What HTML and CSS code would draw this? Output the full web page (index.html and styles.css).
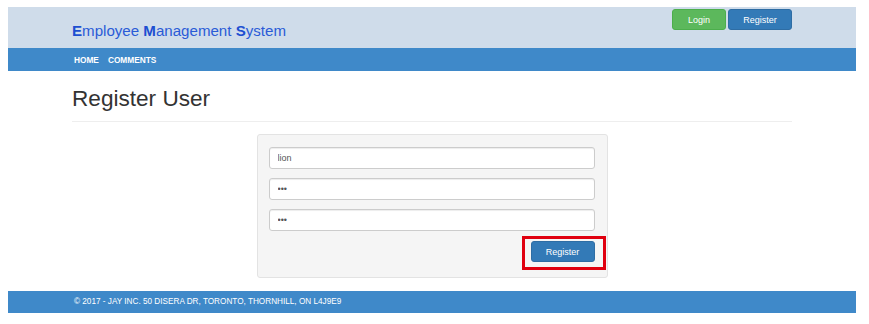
FILE: index.html
```html
<!DOCTYPE html>
<html>
<head>
<meta charset="utf-8">
<link rel="stylesheet" href="styles.css">
</head>
<body>
<div class="page">
  <header class="topbar">
    <div class="container topbar-inner">
      <div class="brand"><b>E</b>mployee <b>M</b>anagement <b>S</b>ystem</div>
      <div class="auth">
        <a class="btn btn-success">Login</a>
        <a class="btn btn-primary">Register</a>
      </div>
    </div>
  </header>
  <nav class="navbar">
    <div class="container nav-inner">
      <a class="nav-link">HOME</a>
      <a class="nav-link">COMMENTS</a>
    </div>
  </nav>
  <main class="container main">
    <h1 class="title">Register User</h1>
    <hr class="rule">
    <div class="well">
      <div class="field"><input class="input" type="text" value="lion"></div>
      <div class="field"><input class="input" type="password" value="abc"></div>
      <div class="field"><input class="input" type="password" value="abc"></div>
      <div class="actions">
        <span class="highlight"><a class="btn btn-primary btn-submit">Register</a></span>
      </div>
    </div>
  </main>
  <footer class="footer">
    <div class="container footer-inner">© 2017 - JAY INC. 50 DISERA DR, TORONTO, THORNHILL, ON L4J9E9</div>
  </footer>
</div>
</body>
</html>
```
FILE: styles.css
```css
* { box-sizing: border-box; }
html, body { margin: 0; padding: 0; background: #fff; }
body {
  font-family: "Liberation Sans", Arial, sans-serif;
  color: #333;
  padding: 7px 13px 0 8px;
}
.page { width: 848px; }
.container { width: 720px; margin: 0 auto; }
.topbar { background: #cfdcea; height: 41px; }
.topbar-inner { display: flex; justify-content: space-between; align-items: flex-start; }
.brand {
  font-size: 15.1px;
  color: #2a5bd7;
  padding-top: 15px;
  line-height: 18px;
}
.brand b { color: #1d4fd1; }
.auth { display: flex; gap: 2px; padding-top: 2px; }
.btn {
  display: inline-flex;
  align-items: center;
  justify-content: center;
  height: 21px;
  font-size: 9px;
  color: #fff;
  border-radius: 3px;
  border: 1px solid transparent;
}
.btn-success { background: #5cb85c; border-color: #4cae4c; width: 54px; }
.btn-primary { background: #337ab7; border-color: #2e6da4; width: 64px; }
.navbar { background: #3f89c9; height: 23px; }
.nav-inner { display: flex; gap: 9px; padding-left: 2px; align-items: center; height: 23px; }
.nav-link { color: #fff; font-size: 8.3px; font-weight: bold; }
.main { padding-top: 10px; }
.title {
  font-weight: normal;
  font-size: 22.6px;
  margin: 0;
  line-height: 26px;
  padding-top: 5px;
  color: #333;
}
.rule { border: 0; border-top: 1px solid #eee; margin: 9px 0 12px; }
.well {
  width: 351px;
  margin: 0 auto;
  background: #f5f5f5;
  border: 1px solid #e3e3e3;
  border-radius: 3px;
  padding: 12px 12px 7px 11px;
  display: flex;
  flex-direction: column;
  gap: 9px;
}
.input {
  display: block;
  width: 100%;
  height: 22px;
  border: 1px solid #ccc;
  border-radius: 3px;
  background: #fff;
  font-family: "Liberation Sans", Arial, sans-serif;
  font-size: 9px;
  color: #555;
  padding: 0 8px;
  box-shadow: inset 0 1px 1px rgba(0,0,0,.075);
}
.actions { display: flex; justify-content: flex-end; margin-right: -11px; margin-top: -4px; }
.highlight {
  display: inline-flex;
  border: 3px solid #e0000f;
  padding: 2px 8px 5px 6px;
}
.btn-submit { width: 64px; height: 21px; }
.footer { background: #3f89c9; height: 22px; margin-top: 13px; }
.footer-inner { color: #fff; font-size: 8.2px; line-height: 22px; padding-left: 2px; }
```
